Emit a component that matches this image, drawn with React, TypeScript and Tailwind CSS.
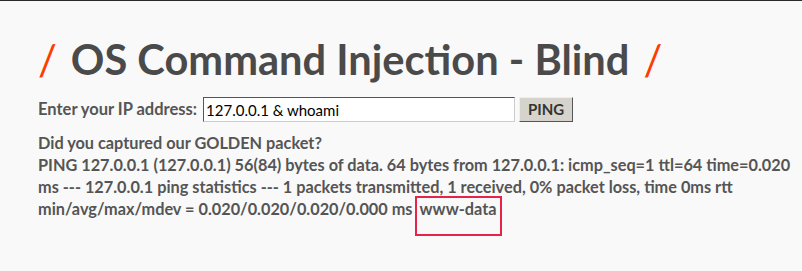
export default function App() {
  return (
    <div className="min-h-[271px] w-full bg-[#f9f9f9] border-t border-[#2a2a2a]" style={{ fontFamily: "Lato, 'Noto Sans', sans-serif" }}>
      <div className="pl-[38px] pr-[4px] pt-[30px]">
        <h1 className="flex items-center text-[41.6px] leading-[56px] font-bold text-[#4a4a4a]">
          <span className="text-[#ff3c00] font-normal mr-[14px]">/</span>
          <span>OS Command Injection - Blind</span>
          <span className="text-[#ff3c00] font-normal ml-[14px]">/</span>
        </h1>
        <form className="mt-[10px] flex items-center text-[16.5px] font-bold text-[#555]" onSubmit={(e) => e.preventDefault()}>
          <label htmlFor="target">Enter your IP address:</label>
          <input
            id="target"
            defaultValue="127.0.0.1 & whoami"
            className="ml-[6px] w-[312px] h-[25px] bg-white px-[2px] text-[15px] font-normal text-black border border-t-[#555] border-l-[#555] border-b-[#ccc] border-r-[#ccc] outline-none"
          />
          <button className="ml-[4px] h-[25px] w-[54px] bg-[#d6d3cc] text-[15px] text-[#333] font-bold border border-t-[#eee] border-l-[#eee] border-b-[#555] border-r-[#555]">
            PING
          </button>
        </form>
        <div className="mt-[10px] text-[16.3px] leading-[22px] font-bold text-[#555]">
          <p>Did you captured our GOLDEN packet?</p>
          <p>
            PING 127.0.0.1 (127.0.0.1) 56(84) bytes of data. 64 bytes from 127.0.0.1: icmp_seq=1 ttl=64 time=0.020 ms --- 127.0.0.1 ping statistics --- 1 packets transmitted, 1 received, 0% packet loss, time 0ms rtt min/avg/max/mdev = 0.020/0.020/0.020/0.000 ms
            <span className="inline-block align-top ml-[2px] border-2 border-[#e8234a] pl-[3px] pr-[4px] pb-[14px] -mt-[2px] -mb-[16px]">www-data</span>
          </p>
        </div>
      </div>
    </div>
  );
}
